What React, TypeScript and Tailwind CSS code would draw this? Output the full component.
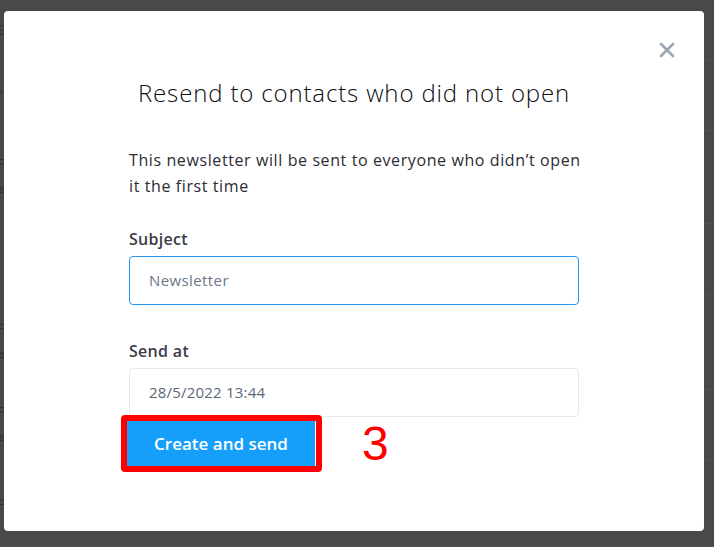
import { X } from 'lucide-react';

const bgRows = [
  { h: 60, lines: ['S'] },
  { h: 71, lines: ['"'] },
  { h: 93, lines: ['F', 'A'] },
  { h: 71, lines: [] },
  { h: 95, lines: ['F', 'A'] },
  { h: 70, lines: ['F', 'A'] },
  { h: 87, lines: ['PMTA (ONLY'] },
];

export default function App() {
  return (
    <div className="relative w-[714px] h-[547px] overflow-hidden bg-[#494949] font-['Open_Sans',sans-serif]">
      {/* Page behind the overlay */}
      <div className="flex flex-col">
        {bgRows.map((row, i) => (
          <div
            key={i}
            style={{ height: row.h }}
            className="flex flex-col justify-center border-b border-[#525252] -ml-[3px] text-[15px] leading-[27px] text-[#333]"
          >
            {row.lines.map((l, j) => (
              <span key={j}>{l}</span>
            ))}
          </div>
        ))}
      </div>

      {/* Modal */}
      <div className="absolute left-[4px] top-[11px] w-[700px] h-[520px] rounded-[4px] bg-white">
        <button className="absolute right-[25px] top-[27px] text-[#9ba6b0]">
          <X size={24} strokeWidth={2.6} />
        </button>

        <h2 className="mt-[66px] text-center text-[24px] leading-[32px] font-light tracking-[0.85px] text-[#0d0d10]">
          Resend to contacts who did not open
        </h2>

        <div className="ml-[125px] w-[454px]">
          <p className="mt-[38px] text-[16px] leading-[26px] tracking-[0.6px] text-[#2c2c34]">
            This newsletter will be sent to everyone who didn’t open it the first time
          </p>

          <label className="mt-[28px] block text-[16px] leading-[24px] font-semibold tracking-[0.3px] text-[#3b3b4a]">
            Subject
          </label>
          <div className="mt-[5px] h-[49px] w-[450px] rounded-[4px] border border-[#2196f3] flex items-center px-[19px] text-[15px] tracking-[0.4px] text-[#6a778a]">
            Newsletter
          </div>

          <label className="mt-[34px] block text-[16px] leading-[24px] font-semibold tracking-[0.3px] text-[#3b3b4a]">
            Send at
          </label>
          <div className="mt-[5px] h-[49px] w-[450px] rounded-[4px] border border-[#e8e9ee] flex items-center px-[19px] text-[15px] tracking-[0.2px] text-[#5b667a]">
            28/5/2022 13:44
          </div>

          <div className="flex items-center -mt-[2px] -ml-[8px]">
            <div className="rounded-[4px] border-[6px] border-[#ff0000] bg-white pr-[1px]">
              <button className="h-[45px] w-[188px] bg-[#169ffa] text-[17px] font-semibold text-white">
                Create and send
              </button>
            </div>
            <span className="ml-[40px] text-[48px] leading-none text-[#ff0000] font-['Liberation_Sans',sans-serif]">
              3
            </span>
          </div>
        </div>
      </div>
    </div>
  );
}
